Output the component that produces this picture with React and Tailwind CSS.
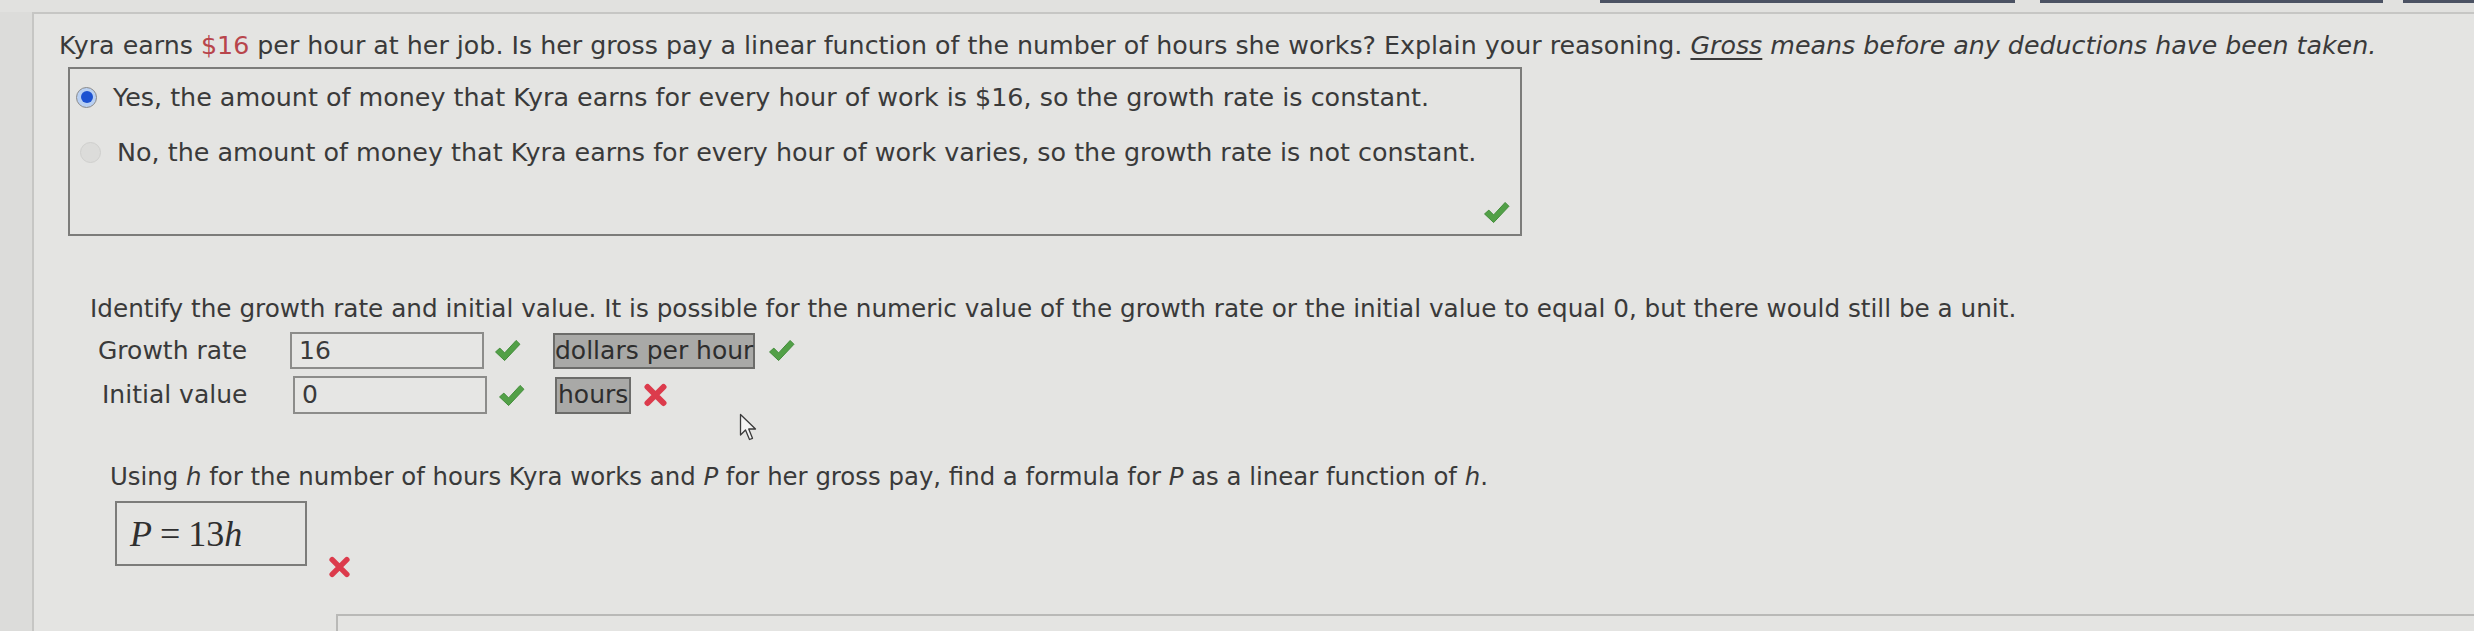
import React from "react";

function Check({ className = "" }) {
  return (
    <svg viewBox="0 0 28 24" className={className}>
      <path d="M1.5 13.5 L6 9.5 L11 14.5 L23 1.5 L27 5.5 L11 22.5 Z" fill="#52a047" stroke="#3f8a36" strokeWidth="1" strokeLinejoin="round" />
    </svg>
  );
}

function Cross({ className = "" }) {
  return (
    <svg viewBox="0 0 24 24" className={className}>
      <path d="M4 4 L20 20 M20 4 L4 20" stroke="#dc3b4c" strokeWidth="6" strokeLinecap="round" />
    </svg>
  );
}

function Cursor() {
  return (
    <svg viewBox="0 0 20 30" className="absolute left-[739px] top-[413px] w-[20px] h-[30px]">
      <path d="M1.5 1.5 L1.5 22 L6.5 17 L10.5 26.5 L13.5 25.3 L9.7 16 L16.5 16 Z" fill="#f4f4f4" stroke="#3a3a3a" strokeWidth="1.3" strokeLinejoin="round" />
    </svg>
  );
}

export default function App() {
  return (
    <div className="w-[2474px] h-[631px] bg-[#e1e1df] flex flex-col overflow-hidden relative font-['DejaVu_Sans',sans-serif] text-[#3a3a3a] leading-[30px]">
      <div className="h-[12px] flex items-start shrink-0">
        <div className="w-[1600px]" />
        <div className="w-[415px] h-[3px] bg-[#4b5263]" />
        <div className="w-[25px]" />
        <div className="w-[343px] h-[3px] bg-[#4b5263]" />
        <div className="w-[20px]" />
        <div className="flex-1 h-[3px] bg-[#4b5263]" />
      </div>
      <div className="flex flex-1">
        <div className="w-[32px] bg-[#dcdcda] shrink-0" />
        <div className="flex-1 border-l-2 border-t-2 border-[#c6c6c4] bg-[#e4e4e2] flex flex-col">
          <p className="mt-[17px] ml-[25px] whitespace-nowrap text-[25.3px]">
            Kyra earns <span className="text-[#b8454b]">$16</span> per hour at her job. Is her gross pay a linear function of the number of hours she works? Explain your reasoning.{" "}
            <i>
              <u className="underline-offset-4">Gross</u> means before any deductions have been taken.
            </i>
          </p>

          <div className="mt-[6px] ml-[34px] w-[1454px] h-[169px] border-2 border-[#7c7c7a] relative flex flex-col pl-[6px] pt-[13px] gap-[25px] text-[25.4px]">
            <div className="flex items-center gap-[16px] h-[30px] whitespace-nowrap">
              <span className="w-[21px] h-[21px] rounded-full border border-[#8a8a8a] bg-[#b9d0f2] flex items-center justify-center shrink-0">
                <span className="w-[12px] h-[12px] rounded-full bg-[#1d52d1]" />
              </span>
              <span>Yes, the amount of money that Kyra earns for every hour of work is $16, so the growth rate is constant.</span>
            </div>
            <div className="flex items-center gap-[16px] h-[30px] whitespace-nowrap ml-[4px]">
              <span className="w-[21px] h-[21px] rounded-full border border-[#cfcfcd] bg-[#dcdcda] shrink-0" />
              <span>No, the amount of money that Kyra earns for every hour of work varies, so the growth rate is not constant.</span>
            </div>
            <Check className="absolute right-[10px] bottom-[10px] w-[27px] h-[23px]" />
          </div>

          <p className="mt-[58px] ml-[56px] whitespace-nowrap text-[24.7px]">
            Identify the growth rate and initial value. It is possible for the numeric value of the growth rate or the initial value to equal 0, but there would still be a unit.
          </p>

          <div className="mt-[8px] ml-[64px] flex items-center h-[37px] whitespace-nowrap text-[25px]">
            <span className="w-[192px]">Growth rate</span>
            <div className="w-[194px] h-[37px] border-2 border-[#8c8c8a] bg-[#e6e6e4] flex items-center pl-[7px]">16</div>
            <Check className="ml-[10px] w-[27px] h-[23px]" />
            <div className="ml-[32px] h-[36px] bg-[#a9a9a7] border-2 border-[#6c6c6a] flex items-center text-[#2e2e2e]">dollars per hour</div>
            <Check className="ml-[13px] w-[27px] h-[23px]" />
          </div>
          <div className="mt-[7px] ml-[68px] flex items-center h-[38px] whitespace-nowrap text-[25px]">
            <span className="w-[191px]">Initial value</span>
            <div className="w-[194px] h-[38px] border-2 border-[#8c8c8a] bg-[#e6e6e4] flex items-center pl-[7px]">0</div>
            <Check className="ml-[11px] w-[27px] h-[23px]" />
            <div className="ml-[30px] h-[37px] px-[1px] bg-[#a9a9a7] border-2 border-[#6c6c6a] flex items-center text-[#2e2e2e]">hours</div>
            <Cross className="ml-[12px] w-[25px] h-[24px]" />
          </div>

          <p className="mt-[48px] ml-[76px] whitespace-nowrap text-[24.4px]">
            Using <i>h</i> for the number of hours Kyra works and <i>P</i> for her gross pay, find a formula for <i>P</i> as a linear function of <i>h</i>.
          </p>

          <div className="mt-[9px] ml-[81px] flex items-start">
            <div className="w-[192px] h-[65px] border-2 border-[#7c7c7a] flex items-center pl-[13px] font-['Liberation_Serif',serif] text-[36px] leading-none text-[#2f2f2f]">
              <i>P</i>
              <span className="mx-[8px]">=</span>
              <span>13</span>
              <i>h</i>
            </div>
            <Cross className="ml-[20px] mt-[55px] w-[25px] h-[22px]" />
          </div>

          <div className="mt-[36px] ml-[302px] flex-1 border-t-2 border-l-2 border-[#b9b9b7]" />
        </div>
      </div>
      <Cursor />
    </div>
  );
}
